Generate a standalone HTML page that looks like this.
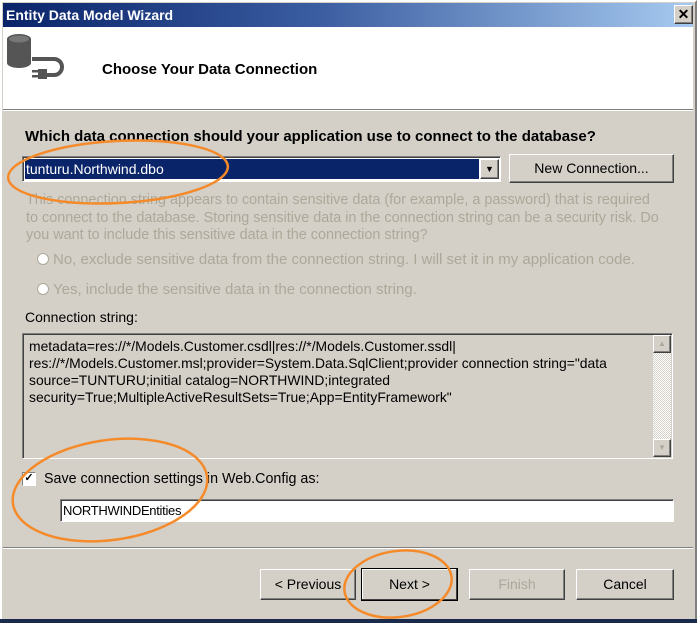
<!DOCTYPE html><html><head><style>
*{margin:0;padding:0;box-sizing:border-box}
body{width:697px;height:623px;background:#fff;position:relative;overflow:hidden;font-family:"Liberation Sans",sans-serif;font-size:13.5px;color:#000}
.a{position:absolute;white-space:nowrap}
.g{color:#aca899}
.btn{position:absolute;background:#d4d0c8;border:1px solid;border-color:#fff #404040 #404040 #fff;box-shadow:inset -1px -1px 0 #808080;text-align:center;font-size:14px}
.sunk{position:absolute;background:#fff;border:1px solid;border-color:#808080 #fff #fff #808080;box-shadow:inset 1px 1px 0 #404040}
</style></head><body>
<div class="a" style="left:0;top:0;width:697px;height:623px;background:#d4d0c8;border:2px solid #fff;border-right-color:#808080;border-bottom-color:#404040"></div>
<div class="a" style="left:3px;top:3px;width:690px;height:24px;background:linear-gradient(90deg,#0a246a 0%,#3a5ca0 45%,#a6caf0 100%)"></div>
<div class="a" style="left:6px;top:7px;color:#fff;font-weight:bold;font-size:14px">Entity Data Model Wizard</div>
<div class="btn" style="left:674px;top:5px;width:19px;height:19px;font-weight:bold;font-size:14px;line-height:16px">✕</div>
<div class="a" style="left:3px;top:27px;width:690px;height:82px;background:#fff"></div>
<svg class="a" style="left:4px;top:30px" width="62" height="56" viewBox="0 0 62 56">
<ellipse cx="15" cy="9" rx="12" ry="5" fill="#555"/><rect x="3" y="9" width="24" height="24" fill="#555"/><ellipse cx="15" cy="33" rx="12" ry="5" fill="#555"/><ellipse cx="15" cy="9" rx="10" ry="3.5" fill="#777"/>
<path d="M28 29 H50 A8 8 0 0 1 50 45 H42" stroke="#555" stroke-width="4" fill="none"/>
<rect x="34" y="39" width="9" height="10" fill="#555"/><rect x="28" y="40" width="6" height="2.5" fill="#555"/><rect x="28" y="45" width="6" height="2.5" fill="#555"/></svg>
<div class="a" style="left:102px;top:61px;font-weight:bold;font-size:15px">Choose Your Data Connection</div>
<div class="a" style="left:3px;top:109px;width:690px;height:2px;border-top:1px solid #808080;border-bottom:1px solid #fff"></div>
<div class="a" style="left:25px;top:128px;font-weight:bold;font-size:15px">Which data connection should your application use to connect to the database?</div>
<div class="sunk" style="left:22px;top:156px;width:479px;height:26px"></div>
<div class="a" style="left:25px;top:159px;width:454px;height:20px;background:#0a246a;color:#fff;font-size:14px;line-height:20px;padding-left:1px">tunturu.Northwind.dbo</div>
<div class="btn" style="left:480px;top:159px;width:19px;height:20px;font-size:9px;line-height:18px">▼</div>
<div class="btn" style="left:509px;top:154px;width:165px;height:29px;line-height:27px">New Connection...</div>
<div class="a g" style="left:26px;top:192px;line-height:17.5px;font-size:14.4px">This connection string appears to contain sensitive data (for example, a password) that is required<br>to connect to the database. Storing sensitive data in the connection string can be a security risk. Do<br>you want to include this sensitive data in the connection string?</div>
<div class="a" style="left:37px;top:253px;width:12px;height:12px;border-radius:50%;border:1px solid #aca899;background:#fff"></div>
<div class="a g" style="left:53px;top:251px;font-size:15px">No, exclude sensitive data from the connection string. I will set it in my application code.</div>
<div class="a" style="left:37px;top:283px;width:12px;height:12px;border-radius:50%;border:1px solid #aca899;background:#fff"></div>
<div class="a g" style="left:53px;top:281px;font-size:15px">Yes, include the sensitive data in the connection string.</div>
<div class="a" style="left:25px;top:309px;font-size:14px">Connection string:</div>
<div class="a" style="left:22px;top:333px;width:651px;height:126px;border:1px solid;border-color:#808080 #fff #fff #808080;box-shadow:inset 1px 1px 0 #404040;background:#d4d0c8"></div>
<div class="a" style="left:29px;top:338px;font-size:13.9px;line-height:17px">metadata=res://*/Models.Customer.csdl|res://*/Models.Customer.ssdl|<br>res://*/Models.Customer.msl;provider=System.Data.SqlClient;provider connection string="data<br>source=TUNTURU;initial catalog=NORTHWIND;integrated<br>security=True;MultipleActiveResultSets=True;App=EntityFramework"</div>
<div class="a" style="left:653px;top:335px;width:18px;height:122px;background:repeating-conic-gradient(#fff 0 25%,#d4d0c8 0 50%) 0 0/2px 2px"></div>
<div class="btn" style="left:653px;top:335px;width:18px;height:18px;font-size:8px;line-height:16px;color:#aca899">▲</div>
<div class="btn" style="left:653px;top:439px;width:18px;height:18px;font-size:8px;line-height:16px;color:#aca899">▼</div>
<div class="a" style="left:22px;top:472px;width:14px;height:14px;background:#fff;border:1px solid;border-color:#808080 #fff #fff #808080;font-size:11px;line-height:11px;text-align:center;font-weight:bold">✓</div>
<div class="a" style="left:44px;top:471px;font-size:14.3px">Save connection settings in Web.Config as:</div>
<div class="sunk" style="left:60px;top:499px;width:614px;height:23px"></div>
<div class="a" style="left:63px;top:503px;font-size:13px;letter-spacing:-0.3px">NORTHWINDEntities</div>
<div class="a" style="left:3px;top:547px;width:690px;height:2px;border-top:1px solid #808080;border-bottom:1px solid #fff"></div>
<div class="btn" style="left:260px;top:569px;width:96px;height:31px;line-height:29px">&lt; Previous</div>
<div class="btn" style="left:361px;top:568px;width:97px;height:33px;line-height:31px;border:1px solid #000;box-shadow:inset -1px -1px 0 #404040,inset 1px 1px 0 #fff">Next &gt;</div>
<div class="btn" style="left:469px;top:569px;width:96px;height:31px;line-height:29px;color:#aca899">Finish</div>
<div class="btn" style="left:576px;top:569px;width:98px;height:31px;line-height:29px">Cancel</div>
<div class="a" style="left:0;top:619px;width:697px;height:4px;background:#1a2a4a"></div>
<svg class="a" style="left:0;top:0" width="697" height="623"><g fill="none" stroke="#f58a2a" stroke-width="2.5">
<ellipse cx="118" cy="172" rx="110" ry="31" transform="rotate(-3 118 172)"/>
<ellipse cx="110" cy="490" rx="98" ry="50" transform="rotate(-8 110 490)"/>
<ellipse cx="398" cy="584" rx="54" ry="33" transform="rotate(-8 398 584)"/>
</g></svg>
</body></html>
